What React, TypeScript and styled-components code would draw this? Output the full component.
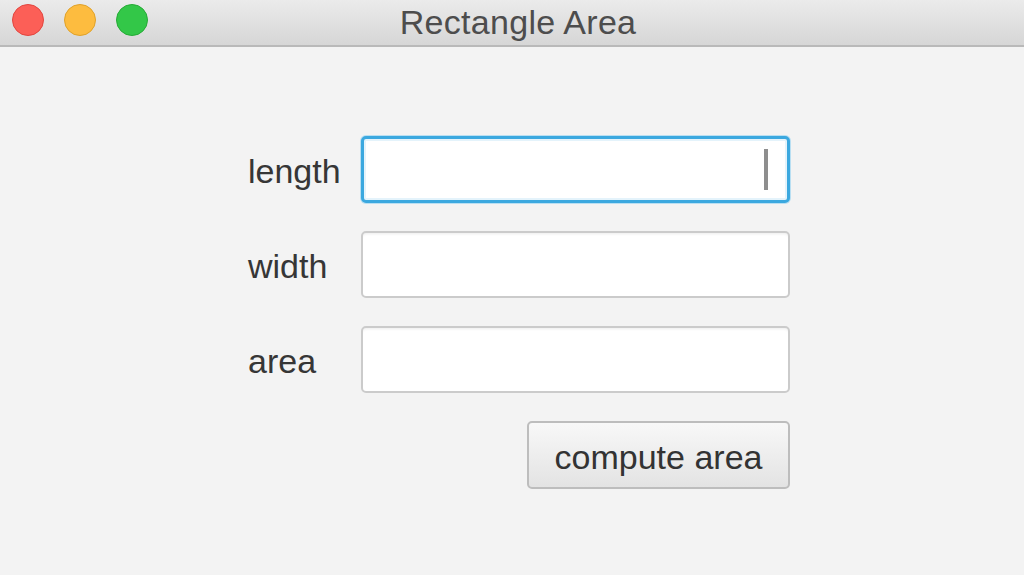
import React from 'react'
import styled, { createGlobalStyle } from 'styled-components'

const GlobalStyle = createGlobalStyle`
  html, body {
    margin: 0;
    padding: 0;
    background: #f3f3f3;
  }
  body {
    font-family: 'Liberation Sans', Arial, sans-serif;
  }
`

const Window = styled.div`
  width: 1024px;
  height: 575px;
  background: #f3f3f3;
  overflow: hidden;
  display: flex;
  flex-direction: column;
`

const TitleBar = styled.div`
  height: 47px;
  flex-shrink: 0;
  position: relative;
  display: flex;
  align-items: center;
  justify-content: center;
  background: linear-gradient(to bottom, #ebebeb 0%, #d6d6d6 100%);
  border-bottom: 2px solid #b9b9b9;
  box-sizing: border-box;
`

const Lights = styled.div`
  position: absolute;
  left: 12px;
  top: 4px;
  display: flex;
  gap: 20px;
`

const Light = styled.span<{ $fill: string; $edge: string }>`
  width: 32px;
  height: 32px;
  border-radius: 50%;
  background: ${p => p.$fill};
  border: 1px solid ${p => p.$edge};
  box-sizing: border-box;
`

const Title = styled.div`
  font-size: 34px;
  color: #4d4d4d;
  padding-left: 12px;
  letter-spacing: 0.3px;
`

const Form = styled.div`
  display: grid;
  grid-template-columns: 113px 429px;
  row-gap: 28px;
  padding: 89px 0 0 248px;
  align-items: center;
`

const Label = styled.label`
  font-size: 34px;
  color: #363636;
  padding-top: 4px;
`

const FieldWrap = styled.div`
  position: relative;
  height: 67px;
`

const Field = styled.input<{ $focused?: boolean }>`
  width: 100%;
  height: 100%;
  box-sizing: border-box;
  border-radius: 5px;
  background: #fff;
  outline: none;
  font-size: 30px;
  font-family: inherit;
  padding: 0 12px;
  border: ${p => (p.$focused ? '3px solid #3ba8df' : '2px solid #cbcbcb')};
  box-shadow: ${p =>
    p.$focused
      ? 'inset 0 0 0 2px #e4f3fb, 0 0 0 1px #b9dff2'
      : 'inset 0 3px 3px -2px rgba(0, 0, 0, 0.08)'};
`

const Caret = styled.span`
  position: absolute;
  left: 403px;
  top: 13px;
  width: 4px;
  height: 41px;
  background: #8e8e8e;
`

const ButtonRow = styled.div`
  grid-column: 2;
  display: flex;
  justify-content: flex-end;
`

const Button = styled.button`
  width: 263px;
  height: 68px;
  border-radius: 5px;
  border: 2px solid #bdbdbd;
  background: linear-gradient(to bottom, #f8f8f8 0%, #e3e3e3 100%);
  font-family: inherit;
  font-size: 34px;
  color: #333;
  padding: 4px 0 0;
`

const App: React.FC = () => {
  return (
    <>
      <GlobalStyle />
      <Window>
        <TitleBar>
          <Lights>
            <Light $fill="#fc5f57" $edge="#e2463f" />
            <Light $fill="#fdbc3f" $edge="#e0a22a" />
            <Light $fill="#33c748" $edge="#26ab36" />
          </Lights>
          <Title>Rectangle Area</Title>
        </TitleBar>

        <Form>
          <Label>length</Label>
          <FieldWrap>
            <Field $focused />
            <Caret />
          </FieldWrap>

          <Label>width</Label>
          <FieldWrap>
            <Field />
          </FieldWrap>

          <Label>area</Label>
          <FieldWrap>
            <Field />
          </FieldWrap>

          <ButtonRow>
            <Button>compute area</Button>
          </ButtonRow>
        </Form>
      </Window>
    </>
  )
}

export default App
